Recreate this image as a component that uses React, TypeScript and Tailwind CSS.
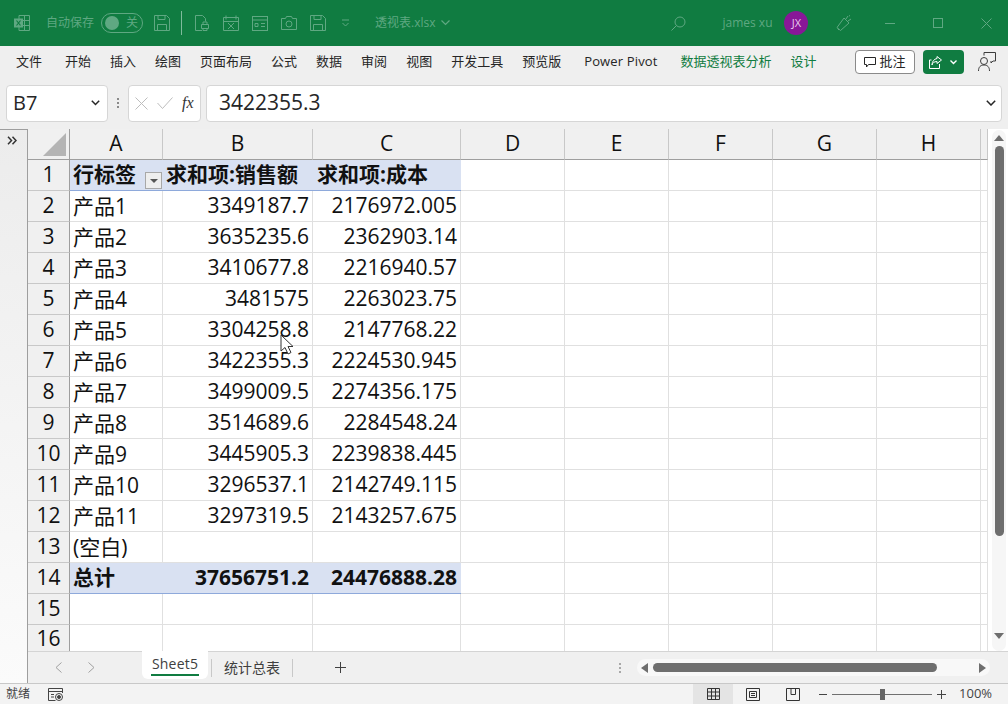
import React from "react";

const FONT = "[font-family:'Open_Sans','Noto_Sans_CJK_SC',sans-serif]";

const rows: [string, string, string][] = [
  ["产品1", "3349187.7", "2176972.005"],
  ["产品2", "3635235.6", "2362903.14"],
  ["产品3", "3410677.8", "2216940.57"],
  ["产品4", "3481575", "2263023.75"],
  ["产品5", "3304258.8", "2147768.22"],
  ["产品6", "3422355.3", "2224530.945"],
  ["产品7", "3499009.5", "2274356.175"],
  ["产品8", "3514689.6", "2284548.24"],
  ["产品9", "3445905.3", "2239838.445"],
  ["产品10", "3296537.1", "2142749.115"],
  ["产品11", "3297319.5", "2143257.675"],
  ["(空白)", "", ""],
];

const colLetters = ["A", "B", "C", "D", "E", "F", "G", "H", ""];

function Ic({ w = 16, h = 16, vb, children, cls = "" }: { w?: number; h?: number; vb?: string; children: React.ReactNode; cls?: string }) {
  return (
    <svg width={w} height={h} viewBox={vb ?? `0 0 ${w} ${h}`} fill="none" stroke="currentColor" strokeWidth="1" className={"shrink-0 " + cls}>
      {children}
    </svg>
  );
}

function SaveIcon() {
  return (
    <Ic w={16} h={16}>
      <path d="M.5.5h12l3 3v12H.5z" />
      <path d="M4 .5v4h7v-4M3.5 15.5v-6h9v6" />
    </Ic>
  );
}

function TitleBar() {
  return (
    <div className="h-[46px] bg-[#107c41] flex items-center text-[#5fa882] shrink-0">
      <div className="ml-[14px] w-[16px] h-[16px] relative shrink-0">
        <Ic w={16} h={16}>
          <path d="M5 .5h10.5v15H5z" />
          <path d="M5 5.5h10.5M5 10.5h10.5M10.5.5v15" />
          <rect x="0" y="3.5" width="9" height="9" fill="#5fa882" stroke="none" />
          <path d="M2.5 5.5l4 5M6.5 5.5l-4 5" stroke="#107c41" strokeWidth="1.2" />
        </Ic>
      </div>
      <span className="ml-[16px] text-[12px] w-[48px] whitespace-nowrap leading-none">自动保存</span>
      <div className="ml-[7px] w-[42px] h-[20px] rounded-full border border-[#5fa882] flex items-center pl-[3px] shrink-0">
        <span className="w-[14px] h-[14px] rounded-full bg-[#5fa882]" />
        <span className="ml-[7px] text-[12px] leading-none">关</span>
      </div>
      <div className="ml-[11px]"><SaveIcon /></div>
      <div className="ml-[11px] w-px h-[24px] bg-[#7fbb9c]" />
      <div className="ml-[13px]">
        <Ic w={15} h={16}>
          <path d="M7 15.5H.5V.5h7l3 3v3" />
          <path d="M6.5 9.5h7v4h-7zM8 9.5v-2.500h4v2.500M8 13.500v2h4v-2" />
        </Ic>
      </div>
      <div className="ml-[13px]">
        <Ic w={16} h={16}>
          <path d="M.5 15.500V2.500h15v13z" />
          <path d="M3 .5v4M13 .5v4M.5 6.500h15" />
          <path d="M5 8l6 6M11 8l-6 6" />
        </Ic>
      </div>
      <div className="ml-[13px]">
        <Ic w={16} h={15}>
          <rect x=".5" y=".5" width="15" height="14" />
          <path d="M.5 4h15M3 7.500h3v3H3zM9 7.500h4M9 10.500h4" />
        </Ic>
      </div>
      <div className="ml-[13px]">
        <Ic w={16} h={14}>
          <path d="M.5 2.500h4l1-2h5l1 2h4v11H.5z" />
          <circle cx="8" cy="8" r="3" />
        </Ic>
      </div>
      <div className="ml-[13px]"><SaveIcon /></div>
      <div className="ml-[15px]">
        <Ic w={9} h={8}>
          <path d="M1 1h7M1.500 4l3 3 3-3" />
        </Ic>
      </div>
      <span className="ml-[25px] text-[12px] leading-none whitespace-nowrap">透视表.xlsx</span>
      <div className="ml-[6px]">
        <Ic w={9} h={6}><path d="M.5.5l4 4 4-4" strokeWidth="1.200" /></Ic>
      </div>
      <div className="ml-[221px]">
        <Ic w={15} h={15}>
          <circle cx="9" cy="6" r="5" />
          <path d="M5.500 9.500L.5 14.500" />
        </Ic>
      </div>
      <span className="ml-[36px] text-[12px] leading-none whitespace-nowrap w-[50px]">james xu</span>
      <div className="ml-[12px] w-[24px] h-[24px] rounded-full bg-[#881798] text-[#e9c9ee] text-[11px] flex items-center justify-center shrink-0">JX</div>
      <div className="ml-[28px]">
        <Ic w={16} h={16}>
          <path d="M1 12.500L8 3l5 5-8.500 7.500zM3 15l-1.500-1.500" />
          <path d="M10 4l2-3M12 6l3-2M13 1l1-.5" />
        </Ic>
      </div>
      <div className="ml-[33px] w-[10px] h-px bg-[#5fa882]" />
      <div className="ml-[38px] w-[10px] h-[10px] border border-[#5fa882]" />
      <div className="ml-[38px]">
        <Ic w={11} h={11}><path d="M.5.5l10 10M10.500.5l-10 10" /></Ic>
      </div>
    </div>
  );
}

function MenuBar() {
  const items = ["文件", "开始", "插入", "绘图", "页面布局", "公式", "数据", "审阅", "视图", "开发工具", "预览版"];
  return (
    <div className="h-[38px] flex items-center shrink-0 text-[13px] text-[#262626] whitespace-nowrap pb-[6px]">
      <div className="ml-[16px] flex gap-[19px]">
        {items.map((t, i) => (
          <span key={t} className={i === 0 ? "mr-[4px]" : ""}>{t}</span>
        ))}
      </div>
      <span className="ml-[23px] tracking-[0.15px]">Power Pivot</span>
      <span className="ml-[23px] text-[#107c41]">数据透视表分析</span>
      <span className="ml-[19px] text-[#107c41]">设计</span>
      <div className="ml-[38px] w-[60px] h-[24px] bg-white border border-[#8a8a8a] rounded-[4px] flex items-center justify-center gap-[4px]">
        <Ic w={12} h={12}><path d="M.5 1.500h11v7H4.500l-2 2.500V8.500h-2z" /></Ic>
        <span>批注</span>
      </div>
      <div className="ml-[8px] w-[41px] h-[24px] bg-[#107c41] rounded-[4px] flex items-center text-white">
        <div className="ml-[6px]">
          <Ic w={13} h={13}><path d="M8 .5l4.500 3.500L8 7.500V5.500C5 5.500 3.500 7 3 9 3 5.500 5 3 8 2.500zM10.500 8v4.500H.5V4h2" /></Ic>
        </div>
        <div className="ml-[8px]">
          <Ic w={7} h={5}><path d="M.5.5l3 3 3-3" strokeWidth="1.400" /></Ic>
        </div>
      </div>
      <div className="ml-[14px]">
        <Ic w={18} h={20} cls="text-[#3c3c3c]">
          <circle cx="6" cy="9" r="3.500" />
          <path d="M.5 19c0-4 2-6 5.500-6s5.500 2 5.500 6" />
          <path d="M6 3.500V.5h11.500v8.500H15l-2 2V9" />
        </Ic>
      </div>
    </div>
  );
}

function FormulaBar() {
  return (
    <div className="h-[38px] flex items-center shrink-0 pl-[6px]">
      <div className="w-[102px] h-[37px] bg-white border border-[#d6d6d6] rounded-[4px] flex items-center pl-[6px] pr-[7px] justify-between">
        <span className="text-[20px] text-[#262626]">B7</span>
        <Ic w={9} h={6} cls="text-[#262626]"><path d="M.8.8l3.700 3.700L8.200.8" strokeWidth="1.500" /></Ic>
      </div>
      <div className="ml-[9px] flex flex-col gap-[2px]">
        <span className="w-[2px] h-[2px] bg-[#8a8a8a]" />
        <span className="w-[2px] h-[2px] bg-[#8a8a8a]" />
        <span className="w-[2px] h-[2px] bg-[#8a8a8a]" />
      </div>
      <div className="ml-[9px] w-[73px] h-[37px] bg-white border border-[#d6d6d6] rounded-[4px] flex items-center pl-[6px]">
        <Ic w={13} h={13} cls="text-[#bdbdbd]"><path d="M.5.5l12 12M12.500.5l-12 12" /></Ic>
        <div className="ml-[9px]">
          <Ic w={16} h={12} cls="text-[#bdbdbd]"><path d="M.5 6l5 5.500L15.500.5" /></Ic>
        </div>
        <span className="ml-[9px] text-[16px] italic leading-none text-[#333] [font-family:'Liberation_Serif',serif]">fx</span>
      </div>
      <div className="ml-[5px] w-[796px] h-[37px] bg-white border border-[#d6d6d6] rounded-[4px] flex items-center pl-[12px] pr-[5px] justify-between">
        <span className="text-[21px] text-[#262626]">3422355.3</span>
        <Ic w={10} h={6} cls="text-[#262626]"><path d="M.8.8l4.200 4.200L9.200.8" strokeWidth="1.500" /></Ic>
      </div>
    </div>
  );
}

function HeaderRow() {
  return (
    <>
      <div className="h-[31px] bg-[#f0f0f0] border-r border-b border-[#9e9e9e] flex items-end justify-end pr-[3px] pb-[3px]">
        <svg width="23" height="23" viewBox="0 0 23 23" className="shrink-0"><path d="M23 0V23H0z" fill="#b4b4b4" /></svg>
      </div>
      {colLetters.map((c, i) => (
        <div key={i} className="h-[31px] bg-[#f0f0f0] border-r border-b border-r-[#c8c8c8] border-b-[#9e9e9e] flex items-center justify-center text-[21px] text-[#111] pb-[1px]">
          {c}
        </div>
      ))}
    </>
  );
}

function Cell({ children, right, head, bold }: { children?: React.ReactNode; right?: boolean; head?: boolean; bold?: boolean }) {
  return (
    <div
      className={
        "relative h-[31px] flex items-center whitespace-nowrap text-[21px] text-[#111] " +
        (head
          ? "bg-[#d9e1f2] border-b border-[#8ea9db] "
          : "border-r border-b border-[#e0e0e0] ") +
        (right ? "justify-end pb-[1px] " : "pl-[3px] ") +
        (right ? (bold ? "pr-[4px] " : "pr-[3px] ") : "") +
        (bold && !right ? "pb-[2px] " : "") +
        (bold ? "font-bold " : "")
      }
    >
      {children}
    </div>
  );
}

function RowNum({ n, last }: { n: number; last?: boolean }) {
  return (
    <div className={(last ? "h-[26px] pt-[1px] " : "h-[31px] border-b pb-[1px] ") + "bg-[#f0f0f0] border-r border-r-[#9e9e9e] border-b-[#c8c8c8] flex items-center justify-center text-[21px] text-[#111]"}>
      {n}
    </div>
  );
}

function Empty({ count, last }: { count: number; last?: boolean }) {
  return (
    <>
      {Array.from({ length: count }).map((_, i) => (
        <div key={i} className={(last ? "h-[26px] " : "h-[31px] border-b ") + "border-r border-[#e0e0e0]"} />
      ))}
    </>
  );
}

function Sheet() {
  return (
    <div className="relative flex-1 min-w-0 overflow-hidden">
      <div className="grid grid-cols-[42px_93px_150px_148px_104px_104px_104px_104px_104px_7px] [line-height:1]">
        <HeaderRow />

        <RowNum n={1} />
        <Cell head bold>
          <span>行标签</span>
          <span className="absolute right-[1px] top-[12px] w-[17px] h-[17px] bg-[#eeeeee] border border-[#a8a8a8] flex items-center justify-center">
            <span className="w-0 h-0 border-x-[4px] border-x-transparent border-t-[4px] border-t-[#555]" />
          </span>
        </Cell>
        <Cell head bold><span>求和项:销售额</span></Cell>
        <Cell head bold><span className="pl-[1px]">求和项:成本</span></Cell>
        <Empty count={6} />

        {rows.map((r, i) => (
          <React.Fragment key={i}>
            <RowNum n={i + 2} />
            <Cell><span>{r[0]}</span></Cell>
            <Cell right>{r[1]}</Cell>
            <Cell right>{r[2]}</Cell>
            <Empty count={6} />
          </React.Fragment>
        ))}

        <RowNum n={14} />
        <Cell head bold><span>总计</span></Cell>
        <Cell head bold right>37656751.2</Cell>
        <Cell head bold right>24476888.28</Cell>
        <Empty count={6} />

        <RowNum n={15} />
        <Empty count={9} />
        <RowNum n={16} last />
        <Empty count={9} last />
      </div>
      <svg width="14" height="22" viewBox="0 0 14 22" className="absolute left-[252px] top-[205px]">
        <path d="M1 1v16l4-3.500 3 6.500 3-1.500-3-6h5z" fill="#fff" stroke="#333" strokeWidth="1" />
      </svg>
    </div>
  );
}

function VScroll() {
  return (
    <div className="w-[20px] shrink-0 flex flex-col items-center pl-[2px]">
      <div className="mt-[1px] h-[16px] w-[14px] bg-[#f6f6f6] rounded-t-full flex items-center justify-center">
        <span className="w-0 h-0 border-x-[5px] border-x-transparent border-b-[6px] border-b-[#6e6e6e]" />
      </div>
      <div className="w-[14px] flex-1 bg-[#f6f6f6] flex flex-col items-center">
        <div className="w-[9px] h-[390px] rounded-full bg-[#6e6e6e]" />
      </div>
      <div className="h-[20px] w-[14px] bg-[#f6f6f6] rounded-b-full flex items-start justify-center pt-[2px]">
        <span className="w-0 h-0 border-x-[5px] border-x-transparent border-t-[6px] border-t-[#6e6e6e]" />
      </div>
    </div>
  );
}

function TabBar() {
  return (
    <div className="h-[32px] shrink-0 bg-[#f0f0f0] border-t border-[#d4d4d4] flex items-center relative text-[#404040]">
      <div className="ml-[27px] text-[#a0a0a0]">
        <Ic w={7} h={11}><path d="M6.500.5l-5.500 5 5.500 5" /></Ic>
      </div>
      <div className="ml-[26px] text-[#a0a0a0]">
        <Ic w={7} h={11}><path d="M.5.5l5.500 5-5.500 5" /></Ic>
      </div>
      <div className="ml-[47px] self-start w-[66px] h-[28px] bg-white rounded-b-[6px] flex flex-col items-center -mt-px">
        <span className="text-[14px] leading-[26px] h-[23px] tracking-[0.2px]">Sheet5</span>
        <span className="w-[48px] h-[2px] bg-[#107c41]" />
      </div>
      <div className="ml-[3px] w-px h-[18px] bg-[#c8c8c8]" />
      <span className="ml-[12px] text-[14px] whitespace-nowrap">统计总表</span>
      <div className="ml-[12px] w-px h-[18px] bg-[#c8c8c8]" />
      <div className="ml-[42px] text-[#404040]">
        <Ic w={11} h={11}><path d="M5.500 0v11M0 5.500h11" /></Ic>
      </div>
      <div className="ml-[273px] flex flex-col gap-[2px]">
        <span className="w-[2px] h-[2px] bg-[#a8a8a8]" />
        <span className="w-[2px] h-[2px] bg-[#a8a8a8]" />
        <span className="w-[2px] h-[2px] bg-[#a8a8a8]" />
      </div>
      <div className="ml-[16px] w-[353px] h-[17px] bg-[#f8f8f8] rounded-full flex items-center pl-[4px]">
        <span className="w-0 h-0 border-y-[5px] border-y-transparent border-r-[7px] border-r-[#6e6e6e]" />
        <div className="ml-[5px] w-[284px] h-[9px] rounded-full bg-[#6e6e6e]" />
        <span className="ml-[42px] w-0 h-0 border-y-[5px] border-y-transparent border-l-[7px] border-l-[#6e6e6e]" />
      </div>
    </div>
  );
}

function StatusBar() {
  return (
    <div className="h-[21px] shrink-0 bg-[#f3f3f3] border-t border-[#c8c8c8] flex items-center text-[12px] text-[#444]">
      <span className="ml-[6px] whitespace-nowrap">就绪</span>
      <div className="ml-[18px]">
        <Ic w={15} h={13}>
          <path d="M14.500 5V.5H.5v12h7" />
          <path d="M.5 3.500h14M3 6.500h3M3 9h3" />
          <circle cx="11" cy="9" r="3.500" />
          <circle cx="11" cy="9" r="1.500" fill="currentColor" />
        </Ic>
      </div>
      <div className="ml-[630px] w-[40px] h-full bg-[#e4e4e4] flex items-center justify-center text-[#333]">
        <Ic w={13} h={12}><path d="M.5.5h12v11H.5zM.5 4h12M.5 8h12M4.500.5v11M8.500.5v11" /></Ic>
      </div>
      <div className="ml-[13px] text-[#333]">
        <Ic w={14} h={13}><path d="M.5.5h13v12H.5zM3.500 3.500h7v6h-7zM5 5.500h4M5 7.500h4" /></Ic>
      </div>
      <div className="ml-[26px] text-[#333]">
        <Ic w={14} h={13}><path d="M.5.5h13v12H.5zM5 .5v6h4.500v-6" /></Ic>
      </div>
      <div className="ml-[19px] w-[8px] h-px bg-[#444]" />
      <div className="ml-[5px] relative w-[100px] h-px bg-[#707070]">
        <span className="absolute left-[48px] -top-[5px] w-[5px] h-[11px] bg-[#666]" />
      </div>
      <div className="ml-[5px] text-[#444]">
        <Ic w={9} h={9}><path d="M4.500 0v9M0 4.500h9" /></Ic>
      </div>
      <span className="ml-[13px] text-[13px] whitespace-nowrap">100%</span>
    </div>
  );
}

export default function App() {
  return (
    <div className={"w-[1008px] h-[704px] overflow-hidden bg-[#efefef] flex flex-col " + FONT}>
      <TitleBar />
      <MenuBar />
      <FormulaBar />
      <div className="h-[7px] shrink-0" />
      <div className="flex-1 min-h-0 flex">
        <div className="w-[28px] shrink-0 bg-gradient-to-b from-[#ececec] to-[#fbfbfb] border-r border-t border-[#9e9e9e] flex justify-center pt-[6px] pr-[4px] text-[#333]">
          <Ic w={10} h={9}><path d="M1 .8l3.500 3.700L1 8.200M5.500.8L9 4.500 5.500 8.200" strokeWidth="1.500" /></Ic>
        </div>
        <div className="flex-1 min-w-0 flex flex-col">
          <div className="flex-1 min-h-0 flex bg-white">
            <Sheet />
            <VScroll />
          </div>
          <TabBar />
        </div>
      </div>
      <StatusBar />
    </div>
  );
}
